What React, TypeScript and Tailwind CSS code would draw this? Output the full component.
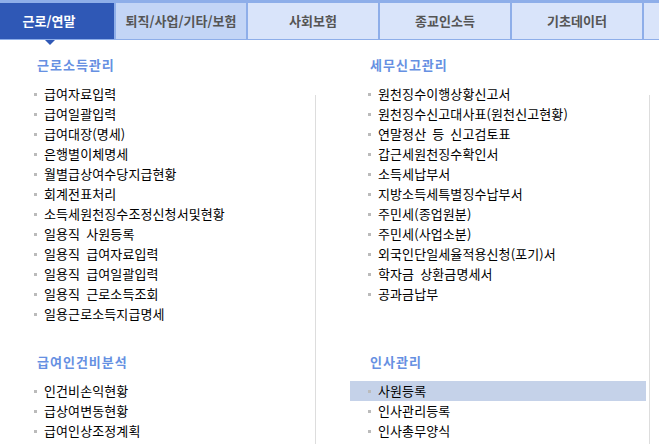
import React from 'react';

const tabs = [
  { label: '근로/연말', active: true, bg: 'bg-[#2f58b6]' },
  { label: '퇴직/사업/기타/보험', active: false, bg: 'bg-[#c3d5f6]' },
  { label: '사회보험', active: false, bg: 'bg-[#d9e4fa]' },
  { label: '종교인소득', active: false, bg: 'bg-[#d9e4fa]' },
  { label: '기초데이터', active: false, bg: 'bg-[#d9e4fa]' },
  { label: '', active: false, bg: 'bg-[#d9e4fa]' },
];

const sections = {
  labor: {
    title: '근로소득관리',
    items: [
      '급여자료입력',
      '급여일괄입력',
      '급여대장(명세)',
      '은행별이체명세',
      '월별급상여수당지급현황',
      '회계전표처리',
      '소득세원천징수조정신청서및현황',
      '일용직  사원등록',
      '일용직  급여자료입력',
      '일용직  급여일괄입력',
      '일용직  근로소득조회',
      '일용근로소득지급명세',
    ],
  },
  tax: {
    title: '세무신고관리',
    items: [
      '원천징수이행상황신고서',
      '원천징수신고대사표(원천신고현황)',
      '연말정산  등  신고검토표',
      '갑근세원천징수확인서',
      '소득세납부서',
      '지방소득세특별징수납부서',
      '주민세(종업원분)',
      '주민세(사업소분)',
      '외국인단일세율적용신청(포기)서',
      '학자금  상환금명세서',
      '공과금납부',
    ],
  },
  cost: {
    title: '급여인건비분석',
    items: ['인건비손익현황', '급상여변동현황', '급여인상조정계획'],
  },
  hr: {
    title: '인사관리',
    items: ['사원등록', '인사관리등록', '인사총무양식'],
  },
};

const MenuList = ({ title, items, selected, titleIndent }: { title: string; items: string[]; selected?: string; titleIndent: string }) => (
  <div>
    <h3 className={`h-[16px] leading-[16px] text-[13px] font-bold tracking-[1px] text-[#6690e2] ${titleIndent}`}>{title}</h3>
    <ul className="mt-[11px] w-[296px]">
      {items.map((item) => (
        <li
          key={item}
          className={`flex items-center h-[20px] pl-[18px] text-[13px] tracking-[0.1px] text-black whitespace-pre ${item === selected ? 'bg-[#c5d2e9]' : ''}`}
        >
          <span className="w-[3px] h-[3px] bg-[#bbbbbb] mr-[7px] shrink-0" />
          <span>{item}</span>
        </li>
      ))}
    </ul>
  </div>
);

export default function App() {
  return (
    <div className="w-[659px] h-[444px] overflow-hidden bg-white" style={{ fontFamily: '"Noto Sans CJK KR", "Noto Sans", sans-serif' }}>
      <div className="pt-[3px] bg-[#8eaee9]">
        <div className="flex -ml-[16px] border-b border-[#8eaee9] w-max">
          {tabs.map((tab, i) => (
            <div
              key={i}
              className={`relative w-[130px] h-[36px] flex items-center justify-center text-[13px] font-bold ${tab.bg} ${tab.active ? 'text-white' : 'text-[#555555]'} ${i > 0 ? 'ml-[2px]' : ''}`}
            >
              {tab.label}
              {tab.active && (
                <span className="absolute left-[61px] top-[37px] w-0 h-0 border-l-[5px] border-r-[5px] border-t-[5px] border-l-transparent border-r-transparent border-t-[#2f58b6]" />
              )}
            </div>
          ))}
        </div>
      </div>

      <div className="grid grid-cols-[315px_1px_333px_1px]">
        <div className="col-start-1 row-start-1 pl-[16px] pt-[17px]">
          <MenuList title={sections.labor.title} items={sections.labor.items} titleIndent="pl-[21px]" />
        </div>
        <div className="col-start-2 row-start-1 row-span-2 bg-[#dddddd] mt-[55px]" />
        <div className="col-start-3 row-start-1 pl-[34px] pt-[17px]">
          <MenuList title={sections.tax.title} items={sections.tax.items} titleIndent="pl-[20px]" />
        </div>
        <div className="col-start-4 row-start-1 row-span-2 bg-[#dddddd] mt-[55px]" />
        <div className="col-start-1 row-start-2 pl-[16px] pt-[30px] pb-[10px]">
          <MenuList title={sections.cost.title} items={sections.cost.items} titleIndent="pl-[21px]" />
        </div>
        <div className="col-start-3 row-start-2 pl-[34px] pt-[30px] pb-[10px]">
          <MenuList title={sections.hr.title} items={sections.hr.items} selected="사원등록" titleIndent="pl-[20px]" />
        </div>
      </div>
    </div>
  );
}
